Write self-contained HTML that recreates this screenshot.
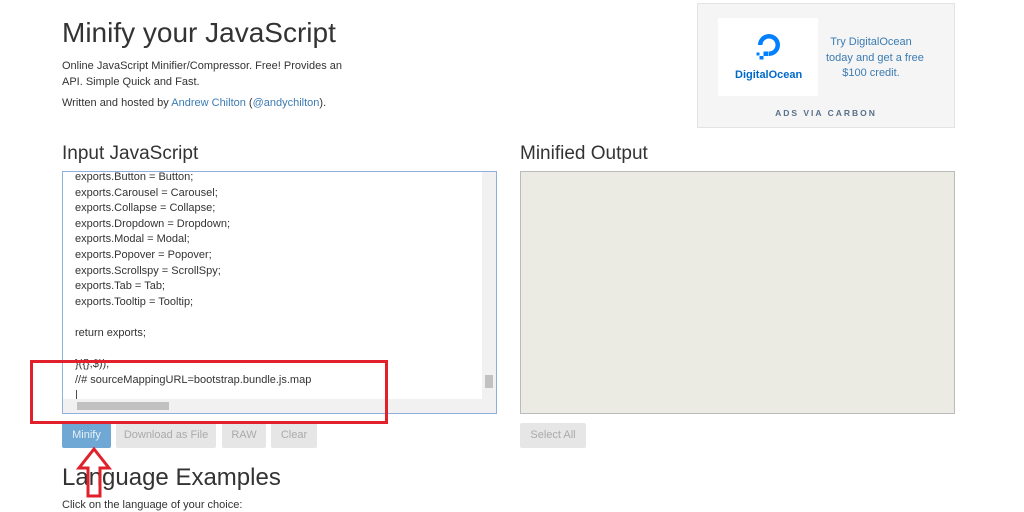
<!DOCTYPE html><html><head><style>
body{margin:0;width:1024px;height:512px;overflow:hidden;background:#fff;font-family:"Liberation Sans",sans-serif;color:#333;position:relative}
.a{position:absolute;white-space:nowrap}
.code div{height:15.6px;font-size:11px;line-height:15.6px}
.btn{position:absolute;top:423px;height:25px;line-height:25px;font-size:11px;text-align:center;background:#e6e6e6;color:#aaa;border-radius:2px}
</style></head><body>
<div class="a" style="left:62px;top:17px;font-size:28px;color:#333">Minify your JavaScript</div>
<div class="a" style="left:62px;top:58px;font-size:11px;line-height:16px">Online JavaScript Minifier/Compressor. Free! Provides an<br>API. Simple Quick and Fast.</div>
<div class="a" style="left:62px;top:97px;font-size:11px">Written and hosted by <span style="color:#3b7bb3">Andrew Chilton</span> (<span style="color:#3b7bb3">@andychilton</span>).</div>
<div class="a" style="left:697px;top:3px;width:256px;height:123px;background:#f5f5f5;border:1px solid #e3e3e3"></div>
<div class="a" style="left:718px;top:18px;width:100px;height:78px;background:#fff"></div>
<svg class="a" style="left:750px;top:32px" width="40" height="34" viewBox="0 0 40 34"><path d="M19 24 V19.5 A6.5 6.5 0 1 0 12.5 13 H8 A11 11 0 1 1 19 24 Z" fill="#0080ff"/><rect x="13.5" y="19.5" width="5" height="4.5" fill="#0080ff"/><rect x="9.5" y="24" width="4" height="3.5" fill="#0080ff"/><rect x="6.5" y="20.5" width="3" height="3" fill="#0080ff"/></svg>
<div class="a" style="left:735px;top:69px;font-size:11px;font-weight:bold;color:#0069c8">DigitalOcean</div>
<div class="a" style="left:826px;top:35px;width:90px;text-align:center;font-size:11px;line-height:15.5px;color:#3b7bb3">Try DigitalOcean<br>today and get a free<br>$100 credit.</div>
<div class="a" style="left:697px;top:108px;width:258px;text-align:center;font-size:8.5px;letter-spacing:2px;font-weight:bold;color:#58708a">ADS VIA CARBON</div>
<div class="a" style="left:62px;top:143px;font-size:19px">Input JavaScript</div>
<div class="a" style="left:520px;top:143px;font-size:19px">Minified Output</div>
<div class="a" style="left:62px;top:171px;width:433px;height:241px;border:1px solid #8fb0dc;overflow:hidden;background:#fff">
<div class="code" style="position:absolute;left:12px;top:-2px">
<div>exports.Button = Button;</div><div>exports.Carousel = Carousel;</div><div>exports.Collapse = Collapse;</div><div>exports.Dropdown = Dropdown;</div><div>exports.Modal = Modal;</div><div>exports.Popover = Popover;</div><div>exports.Scrollspy = ScrollSpy;</div><div>exports.Tab = Tab;</div><div>exports.Tooltip = Tooltip;</div><div></div><div>return exports;</div><div></div><div>}({},$));</div><div>//# sourceMappingURL=bootstrap.bundle.js.map</div><div>|</div></div>
<div style="position:absolute;right:0;top:0;width:14px;height:227px;background:#f1f1f1"></div>
<div style="position:absolute;right:3px;top:203px;width:8px;height:13px;background:#c1c1c1"></div>
<div style="position:absolute;left:0;bottom:0;width:433px;height:14px;background:#f1f1f1"></div>
<div style="position:absolute;left:14px;bottom:3px;width:92px;height:8px;background:#c1c1c1"></div>
</div>
<div class="a" style="left:520px;top:171px;width:433px;height:241px;border:1px solid #bbb;background:#ebebe4"></div>
<div class="btn" style="left:62px;width:49px;background:#6fa8d4;color:#e8f1f8">Minify</div>
<div class="btn" style="left:116px;width:100px">Download as File</div>
<div class="btn" style="left:222px;width:44px">RAW</div>
<div class="btn" style="left:271px;width:46px">Clear</div>
<div class="btn" style="left:520px;width:66px">Select All</div>
<div class="a" style="left:62px;top:464px;font-size:24px">Language Examples</div>
<div class="a" style="left:62px;top:499px;font-size:11px">Click on the language of your choice:</div>
<div class="a" style="left:30px;top:360px;width:352px;height:58px;border:3px solid #e0202a"></div>
<svg class="a" style="left:74px;top:446px" width="40" height="54"><path d="M20 3 L35 22 H26 V50 H14 V22 H5 Z" fill="none" stroke="#e0202a" stroke-width="3"/></svg>
</body></html>
